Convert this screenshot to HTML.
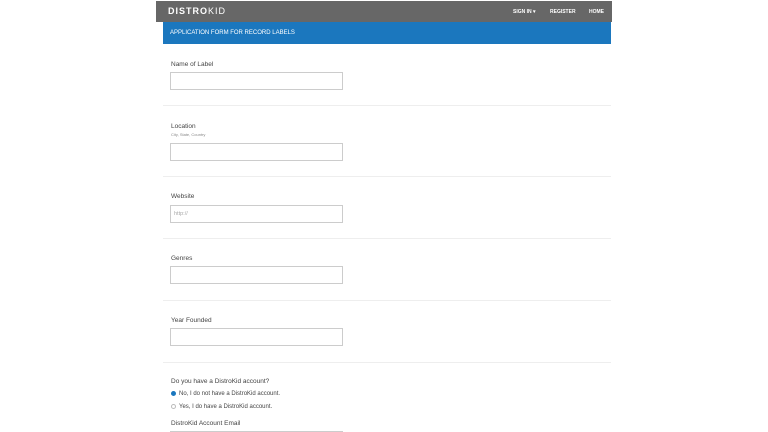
<!DOCTYPE html><html><head><style>
html,body{margin:0;width:768px;height:432px;overflow:hidden;background:#fff;font-family:"Liberation Sans",sans-serif;position:relative}
.a{position:absolute}
.nav{left:156px;top:1px;width:456px;height:21px;background:#676767}
.blue{left:163px;top:22px;width:448px;height:22px;background:#1b77be;color:#fff;font-size:6px;line-height:22px;padding-left:7px;box-sizing:border-box}
.lbl{left:171px;font-size:6.5px;color:#444}
.in{left:170px;width:173px;height:18px;border:1px solid #ccc;box-sizing:border-box}
.sep{left:163px;width:448px;height:1px;background:#eee}
.r{display:inline-block;width:4px;height:4px;border-radius:50%;margin-right:3px;vertical-align:middle}
</style></head><body>
<div class="a nav"></div>
<div class="a" style="left:168px;top:6px;font-size:9px;font-weight:bold;color:#fff;letter-spacing:1px">DISTRO<span style="font-weight:normal">KID</span></div>
<div class="a" style="left:513px;top:9px;font-size:5px;font-weight:bold;color:#fff">SIGN IN ▾</div>
<div class="a" style="left:550px;top:9px;font-size:5px;font-weight:bold;color:#fff">REGISTER</div>
<div class="a" style="left:589px;top:9px;font-size:5px;font-weight:bold;color:#fff">HOME</div>
<div class="a blue">APPLICATION FORM FOR RECORD LABELS</div>
<div class="a lbl" style="top:61px">Name of Label</div><div class="a in" style="top:72px"></div>
<div class="a sep" style="top:105px"></div>
<div class="a lbl" style="top:123px">Location</div><div class="a lbl" style="top:132px;font-size:4px;color:#888">City, State, Country</div>
<div class="a in" style="top:143px"></div>
<div class="a sep" style="top:176px"></div>
<div class="a lbl" style="top:193px">Website</div><div class="a in" style="top:205px"><span style="font-size:5.5px;color:#aaa;position:absolute;left:3px;top:5px">http://</span></div>
<div class="a sep" style="top:238px"></div>
<div class="a lbl" style="top:255px">Genres</div><div class="a in" style="top:266px"></div>
<div class="a sep" style="top:300px"></div>
<div class="a lbl" style="top:317px">Year Founded</div><div class="a in" style="top:328px"></div>
<div class="a sep" style="top:362px"></div>
<div class="a lbl" style="top:378px">Do you have a DistroKid account?</div>
<div class="a lbl" style="top:391px;font-size:6px"><span class="r" style="background:#1b77be;border:1px solid #1b77be;width:3px;height:3px"></span>No, I do not have a DistroKid account.</div>
<div class="a lbl" style="top:404px;font-size:6px"><span class="r" style="border:1px solid #bbb;width:3px;height:3px"></span>Yes, I do have a DistroKid account.</div>
<div class="a lbl" style="top:420px">DistroKid Account Email</div>
<div class="a in" style="top:431px"></div>
</body></html>
